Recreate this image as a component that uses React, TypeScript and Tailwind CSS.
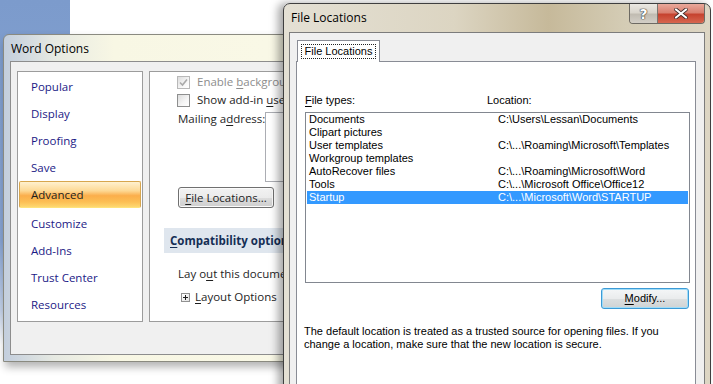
import React from 'react';

const rows: [string, string][] = [
  ['Documents', 'C:\\Users\\Lessan\\Documents'],
  ['Clipart pictures', ''],
  ['User templates', 'C:\\...\\Roaming\\Microsoft\\Templates'],
  ['Workgroup templates', ''],
  ['AutoRecover files', 'C:\\...\\Roaming\\Microsoft\\Word'],
  ['Tools', 'C:\\...\\Microsoft Office\\Office12'],
  ['Startup', 'C:\\...\\Microsoft\\Word\\STARTUP'],
];

const navItems = ['Popular', 'Display', 'Proofing', 'Save', 'Advanced', 'Customize', 'Add-Ins', 'Trust Center', 'Resources'];

function U({ children }: { children: React.ReactNode }) {
  return <span className="underline underline-offset-[2px] decoration-[1px]">{children}</span>;
}

function Checkbox({ checked, disabled }: { checked?: boolean; disabled?: boolean }) {
  return (
    <div
      className={
        'relative w-[13px] h-[13px] shrink-0 border bg-[linear-gradient(135deg,#dcdcdc_0%,#f6f6f6_60%,#ffffff_100%)] ' +
        (disabled ? 'border-[#b8b8b8]' : 'border-[#8e8f8f]')
      }
    >
      {checked && (
        <svg viewBox="0 0 11 11" className="absolute inset-0 w-[11px] h-[11px]">
          <path d="M2 5.5 L4.5 8 L9 2.5" fill="none" stroke={disabled ? '#a9a9a9' : '#3a3a3a'} strokeWidth="1.6" />
        </svg>
      )}
    </div>
  );
}

function WordOptions() {
  return (
    <div className="absolute left-[3px] top-[34px] w-[420px] h-[328px] rounded-t-[6px] border border-[#8a8a80] bg-[linear-gradient(to_right,#c3cedd_0px,#e6e9e2_50px,#f8f7e4_110px,#faf9e8_100%)] shadow-[2px_5px_8px_rgba(0,0,0,0.3)] flex flex-col">
      <div className="h-[26px] flex items-center pl-[7px] pt-[1px] text-[12px] text-black font-['Segoe_UI','Open_Sans',sans-serif]">
        Word Options
      </div>
      <div className="mx-[6px] mb-[6px] flex-1 border border-[#8d8d8d] bg-[#f0f0f0] flex gap-[6px] pt-[9px] pl-[6px] font-['Segoe_UI','Open_Sans',sans-serif] text-[11.5px]">
        <div className="w-[126px] h-[251px] border border-[#9c9c9c] bg-white pt-[1px] shrink-0">
          {navItems.map(item =>
            item === 'Advanced' ? (
              <div
                key={item}
                className="h-[27px] mx-[1px] mb-[2px] flex items-center pl-[11px] rounded-[2px] border border-[#d7a64e] border-b-[#ffe27a] bg-[linear-gradient(to_bottom,#fff1cf_0%,#fdd995_35%,#fbae4b_55%,#fcbf55_80%,#fed870_100%)] text-[#1e1e1e]"
              >
                {item}
              </div>
            ) : (
              <div key={item} className="h-[27px] flex items-center pl-[13px] text-[#1c1a86]">
                {item}
              </div>
            )
          )}
        </div>
        <div className="flex-1 h-[251px] border border-[#9c9c9c] bg-white pt-[1px] pl-[27px] text-[#1e1e1e] overflow-hidden">
          <div className="h-[18px] flex items-center gap-[7px] whitespace-nowrap">
            <Checkbox checked disabled />
            <span className="text-[#8d8d8d]">
              Enable <U>b</U>ackground repagination
            </span>
          </div>
          <div className="h-[18px] flex items-center gap-[7px] whitespace-nowrap">
            <Checkbox />
            <span>
              Show add-in <U>u</U>ser interface errors
            </span>
          </div>
          <div className="flex items-start">
            <div className="w-[96px] pl-[1px] mt-[1px] leading-[18px] whitespace-nowrap">
              Mailing a<U>d</U>dress:
            </div>
            <div className="w-[180px] h-[70px] mt-[3px] border border-[#abadb3] bg-white" />
          </div>
          <div className="mt-[5px] ml-[1px] w-[96px] h-[21px] rounded-[3px] border border-[#707070] bg-[linear-gradient(to_bottom,#f2f2f2_0%,#ebebeb_50%,#dddddd_51%,#cfcfcf_100%)] shadow-[inset_0_0_0_1px_#fbfbfb] flex items-center justify-center whitespace-nowrap">
            <U>F</U>ile Locations...
          </div>
          <div className="mt-[20px] -ml-[13px] h-[25px] bg-[#dfe6ee] flex items-center pl-[6px] font-bold text-[#152e55] whitespace-nowrap">
            <U>C</U>ompatibility options for:
          </div>
          <div className="mt-[13px] pl-[1px] leading-[16px] whitespace-nowrap">
            Lay o<U>u</U>t this document as if created in:
          </div>
          <div className="mt-[7px] pl-[4px] h-[16px] flex items-center gap-[5px] whitespace-nowrap">
            <div className="relative w-[9px] h-[9px] border border-[#919191] bg-[linear-gradient(135deg,#ffffff_0%,#e4e4e4_100%)]">
              <div className="absolute left-[1px] top-[3px] w-[5px] h-[1px] bg-[#1f1f1f]" />
              <div className="absolute left-[3px] top-[1px] w-[1px] h-[5px] bg-[#1f1f1f]" />
            </div>
            <span>
              <U>L</U>ayout Options
            </span>
          </div>
        </div>
      </div>
    </div>
  );
}

function FileLocations() {
  return (
    <div className="absolute left-[283px] top-[3px] w-[428px] h-[400px] rounded-t-[7px] border border-[#3f3f3f] bg-[linear-gradient(to_right,#e4e0d4_0%,#dcd5c2_40%,#c6b99a_62%,#d4ccb5_80%,#ddd6c4_100%)] shadow-[-5px_0_9px_rgba(0,0,0,0.35)] flex flex-col">
      <div className="relative h-[28px] flex items-center pl-[7px] text-[12px] text-black font-['Segoe_UI','Open_Sans',sans-serif]">
        File Locations
        <div className="absolute right-[5px] top-0 flex h-[20px] rounded-b-[4px] border border-t-0 border-[#6d6a63] overflow-hidden">
          <div className="w-[28px] h-full flex items-center justify-center bg-[linear-gradient(to_bottom,#ebe8e2_0%,#d9d5cc_45%,#c1bcb2_55%,#d3cfc7_100%)] border-r border-[#7a7670]">
            <span className="text-[14px] font-bold text-white leading-none [text-shadow:0_0_1px_#333,0_0_1px_#333,0_0_1px_#333] font-['DejaVu_Sans',sans-serif]">?</span>
          </div>
          <div className="w-[46px] h-full flex items-center justify-center bg-[linear-gradient(to_bottom,#e9a99b_0%,#d98070_45%,#c6432f_55%,#d7664f_100%)]">
            <svg viewBox="0 0 14 11" className="w-[14px] h-[11px]">
              <path d="M2 1.5 L12 9.5 M12 1.5 L2 9.5" stroke="#3d2a28" strokeWidth="3.6" strokeLinecap="round" />
              <path d="M2 1.5 L12 9.5 M12 1.5 L2 9.5" stroke="#ffffff" strokeWidth="2.2" strokeLinecap="round" />
            </svg>
          </div>
        </div>
      </div>
      <div className="mx-[5px] flex-1 border border-[#7c7c7c] bg-[#f0f0f0] pt-[7px] pl-[6px] pr-[8px] flex flex-col font-['Liberation_Sans',Arial,sans-serif] text-[11px] text-black">
        <div className="flex">
          <div className="relative z-10 ml-[1px] -mb-[1px] w-[83px] h-[22px] border border-b-0 border-[#898c95] bg-white flex items-center justify-center">
            <div className="px-[3px] h-[15px] border border-dotted border-[#222] flex items-center whitespace-nowrap">
              File Locations
            </div>
          </div>
        </div>
        <div className="flex-1 border border-[#898c95] bg-white pl-[8px] pt-[32px]">
          <div className="flex leading-[13px] whitespace-nowrap">
            <div className="w-[182px] first-letter:underline underline-offset-[2px]">File types:</div>
            <div>Location:</div>
          </div>
          <div className="mt-[5px] w-[385px] h-[171px] border border-[#828790] bg-white px-[1px]">
            {rows.map(([type, loc]) =>
              type === 'Startup' ? (
                <div key={type} className="h-[13px] flex items-center pl-[2px] bg-[#3399ff] text-white whitespace-nowrap">
                  <div className="w-[189px]">{type}</div>
                  <div>{loc}</div>
                </div>
              ) : (
                <div key={type} className="h-[13px] flex items-center pl-[2px] whitespace-nowrap">
                  <div className="w-[189px]">{type}</div>
                  <div>{loc}</div>
                </div>
              )
            )}
          </div>
          <div className="flex justify-end w-[384px] mt-[5px]">
            <div className="w-[88px] h-[21px] rounded-[3px] border border-[#3c9ad6] shadow-[inset_0_0_0_1px_#9fdcf8] bg-[linear-gradient(to_bottom,#f4f6f7_0%,#eaeced_50%,#dcdfe0_51%,#d0d3d4_100%)] flex items-center justify-center">
              <U>M</U>odify...
            </div>
          </div>
          <div className="mt-[16px] -ml-[1px] leading-[13px] whitespace-nowrap">
            The default location is treated as a trusted source for opening files. If you
            <br />
            change a location, make sure that the new location is secure.
          </div>
        </div>
      </div>
    </div>
  );
}

export default function App() {
  return (
    <div className="relative w-[713px] h-[384px] overflow-hidden bg-white">
      <div className="absolute left-0 top-0 w-[70px] h-[345px] bg-[linear-gradient(to_bottom,#7c9bcc_0%,#87a4d3_70%,#c4d2e9_90%,#ffffff_100%)]" />
      <WordOptions />
      <FileLocations />
    </div>
  );
}
